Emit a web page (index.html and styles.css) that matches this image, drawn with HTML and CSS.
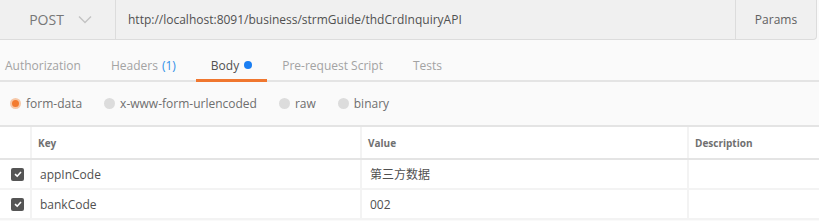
FILE: index.html
```html
<!DOCTYPE html>
<html lang="en">
<head>
    <meta charset="UTF-8">
    <title>Request Builder</title>
    <link rel="stylesheet" href="styles.css">
</head>
<body>
    <div class="url-bar">
        <div class="method">
            <span>POST</span>
            <svg class="caret" width="14" height="9" viewBox="0 0 14 9"><path d="M1 1.5 L7 7.5 L13 1.5" fill="none" stroke="#c3c3c3" stroke-width="1.4"/></svg>
        </div>
        <div class="url">http://localhost:8091/business/strmGuide/thdCrdInquiryAPI</div>
        <div class="params">Params</div>
    </div>

    <div class="tabs">
        <div class="tab">Authorization</div>
        <div class="tab">Headers <span class="count">(1)</span></div>
        <div class="tab active">Body <span class="dot"></span></div>
        <div class="tab">Pre-request Script</div>
        <div class="tab">Tests</div>
    </div>

    <div class="body-modes">
        <label class="mode"><span class="radio checked"></span>form-data</label>
        <label class="mode"><span class="radio"></span>x-www-form-urlencoded</label>
        <label class="mode"><span class="radio"></span>raw</label>
        <label class="mode"><span class="radio"></span>binary</label>
    </div>

    <div class="kv-table">
        <div class="kv-row head">
            <div class="cell check"></div>
            <div class="cell key">Key</div>
            <div class="cell value">Value</div>
            <div class="cell desc">Description</div>
        </div>
        <div class="kv-row">
            <div class="cell check"><span class="box"><svg width="12" height="12" viewBox="0 0 12 12"><path d="M3 6.2 L5.2 8.2 L9 4" fill="none" stroke="#fff" stroke-width="1.6"/></svg></span></div>
            <div class="cell key">appInCode</div>
            <div class="cell value">第三方数据</div>
            <div class="cell desc"></div>
        </div>
        <div class="kv-row">
            <div class="cell check"><span class="box"><svg width="12" height="12" viewBox="0 0 12 12"><path d="M3 6.2 L5.2 8.2 L9 4" fill="none" stroke="#fff" stroke-width="1.6"/></svg></span></div>
            <div class="cell key">bankCode</div>
            <div class="cell value">002</div>
            <div class="cell desc"></div>
        </div>
    </div>
</body>
</html>
```

FILE: styles.css
```css
/* Global */
body {
    margin: 0;
    background: #fafafa;
    font-family: 'Open Sans', 'Noto Sans CJK SC', sans-serif;
    font-size: 12px;
    color: #505050;
    width: 819px;
    height: 221px;
    overflow: hidden;
}

/* URL bar */
.url-bar {
    display: flex;
    height: 39px;
    margin-right: 2px;
    background: #f0f0f0;
    border: 1px solid #dcdcdc;
    border-left: none;
    border-top: none;
    border-radius: 0 0 4px 0;
}

.method {
    width: 116px;
    display: flex;
    align-items: center;
    justify-content: center;
    gap: 14px;
    border-right: 1px solid #dcdcdc;
    font-size: 14px;
    color: #777;
    padding-left: 6px;
    box-sizing: border-box;
}

.url {
    flex: 1;
    display: flex;
    align-items: center;
    padding-left: 12px;
    color: #505050;
    font-size: 12px;
}

.params {
    width: 80px;
    display: flex;
    align-items: center;
    justify-content: center;
    border-left: 1px solid #dcdcdc;
    color: #606060;
    font-size: 12px;
}

/* Tabs */
.tabs {
    display: flex;
    height: 42px;
    border-bottom: 2px solid #e4e4e4;
    box-sizing: border-box;
}

.tab {
    position: relative;
    display: flex;
    align-items: center;
    padding: 10px 15px 0;
    color: #a3a3a3;
    font-size: 12px;
}

.tab:first-child {
    padding-left: 5px;
}

.tab .count {
    color: #2f8fe8;
    margin-left: 4px;
}

.tab.active {
    color: #505050;
    margin-left: 5px;
}

.tab.active::after {
    content: "";
    position: absolute;
    left: 0;
    right: 0;
    bottom: -2px;
    height: 3px;
    background: #f0772f;
}

.dot {
    width: 8px;
    height: 8px;
    border-radius: 50%;
    background: #1a7ef2;
    margin-left: 5px;
}

/* Body modes */
.body-modes {
    display: flex;
    align-items: center;
    height: 42px;
    padding-left: 10px;
}

.mode {
    display: flex;
    align-items: center;
    margin-right: 22px;
    color: #6e6e6e;
    font-size: 12px;
}

.radio {
    width: 11px;
    height: 11px;
    border-radius: 50%;
    background: #dcdcdc;
    margin-right: 5px;
    box-sizing: border-box;
}

.radio.checked {
    background: #f37b2f;
    border: 2px solid #f6c8a8;
}

/* Key/value table */
.kv-table {
    border-top: 2px solid #e4e4e4;
    margin-top: 1px;
}

.kv-row {
    display: flex;
    height: 28px;
    background: #fff;
    border-bottom: 2px solid #f3f3f3;
}

.kv-row.head {
    height: 31px;
    border-bottom: 2px solid #e4e4e4;
}

.cell {
    display: flex;
    align-items: center;
    box-sizing: border-box;
    border-right: 2px solid #f3f3f3;
    padding-left: 8px;
    color: #505050;
    font-size: 12px;
}

.cell:last-child {
    border-right: none;
}

.head .cell {
    font-size: 10px;
    font-weight: 700;
    color: #707070;
    padding-left: 6px;
}

.check {
    width: 32px;
    padding-left: 11px;
}

.key {
    width: 330px;
}

.value {
    width: 327px;
}

.desc {
    flex: 1;
}

.box {
    width: 13px;
    height: 13px;
    border-radius: 2px;
    background: #555;
    display: flex;
    align-items: center;
    justify-content: center;
}
```
